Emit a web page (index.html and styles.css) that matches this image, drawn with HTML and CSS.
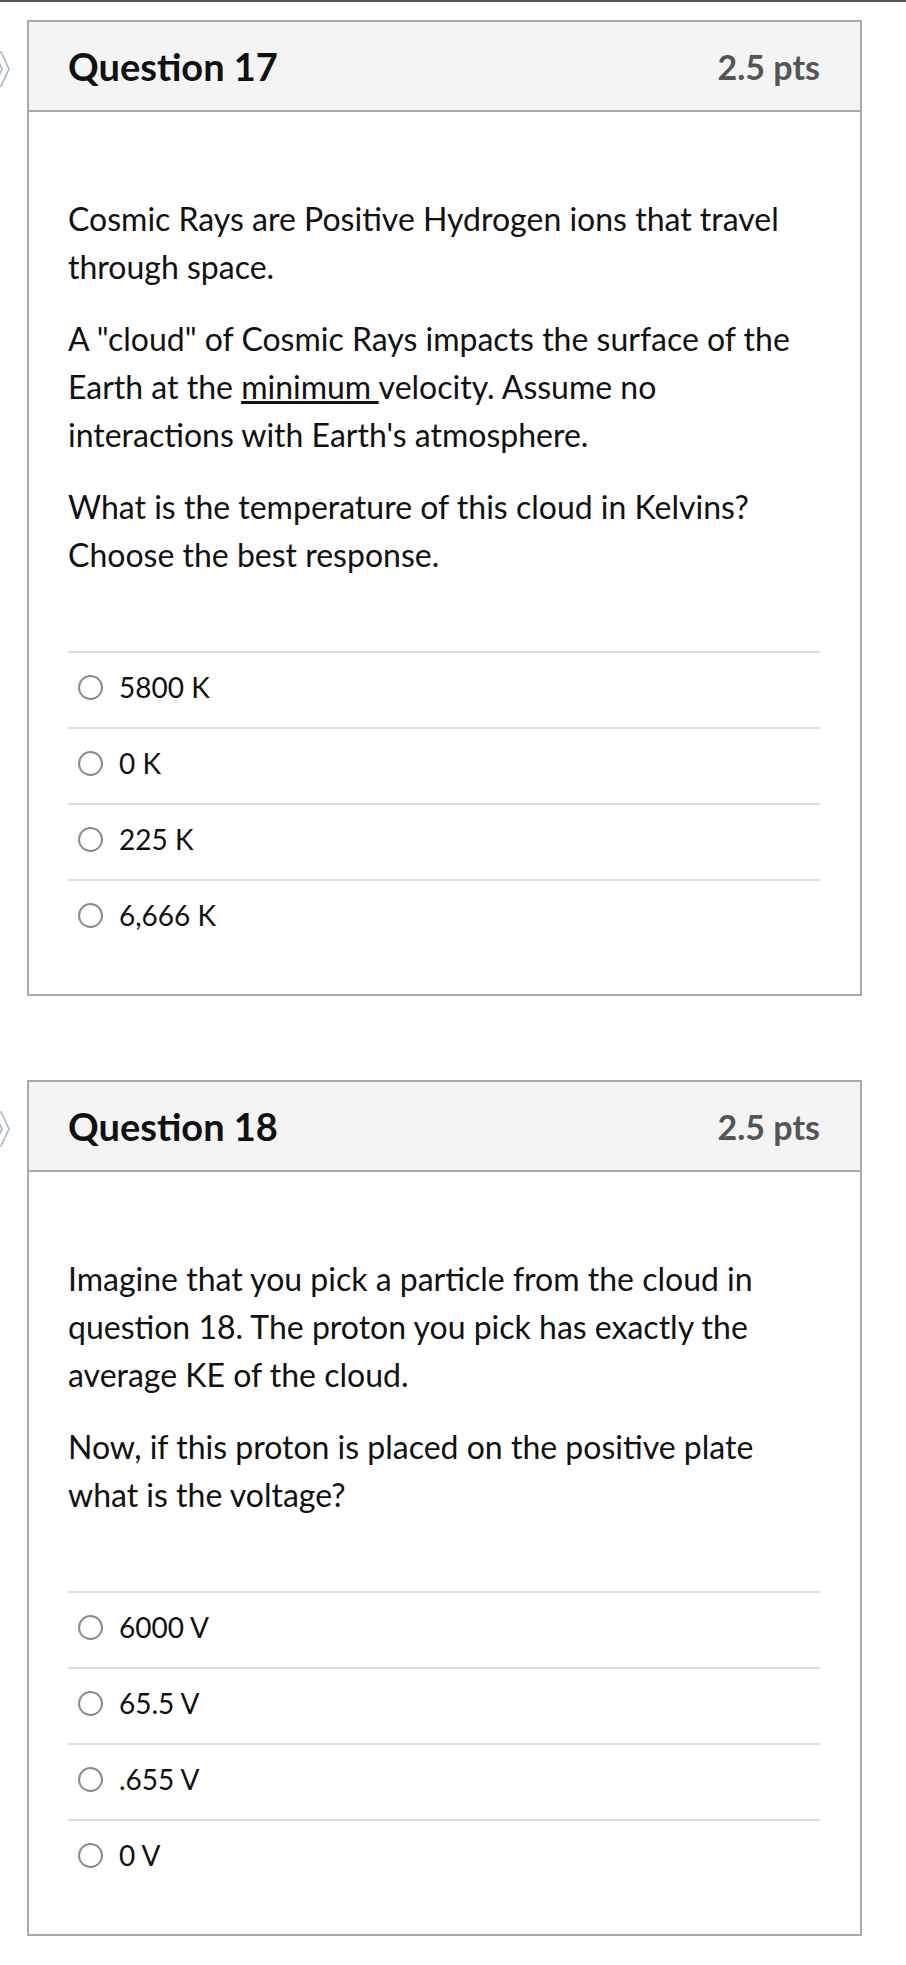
FILE: index.html
```html
<!DOCTYPE html>
<html lang="en">
<head>
<meta charset="utf-8">
<title>Quiz</title>
<link rel="stylesheet" href="styles.css">
</head>
<body>
<div class="topbar"></div>
<main class="quiz">
  <section class="question">
    <svg class="chev" width="14" height="36" viewBox="0 0 14 36"><path d="M-6 1 L1 1 L9 18 L1 35 L-6 35 L2 18 Z" fill="#fff" stroke="#a7b7c9" stroke-width="1.6" stroke-linejoin="miter"/></svg>
    <header class="q-head">
      <h2 class="q-title">Question 17</h2>
      <span class="q-pts">2.5 pts</span>
    </header>
    <div class="q-body">
      <p>Cosmic Rays are Positive Hydrogen ions that travel through space.</p>
      <p>A "cloud" of Cosmic Rays impacts the surface of the Earth at the <u>minimum </u>velocity. Assume no interactions with Earth's atmosphere.</p>
      <p>What is the temperature of this cloud in Kelvins? Choose the best response.</p>
      <ul class="answers">
        <li><span class="radio"></span>5800 K</li>
        <li><span class="radio"></span>0 K</li>
        <li><span class="radio"></span>225 K</li>
        <li><span class="radio"></span>6,666 K</li>
      </ul>
    </div>
  </section>
  <section class="question">
    <svg class="chev" width="14" height="36" viewBox="0 0 14 36"><path d="M-6 1 L1 1 L9 18 L1 35 L-6 35 L2 18 Z" fill="#fff" stroke="#a7b7c9" stroke-width="1.6" stroke-linejoin="miter"/></svg>
    <header class="q-head">
      <h2 class="q-title">Question 18</h2>
      <span class="q-pts">2.5 pts</span>
    </header>
    <div class="q-body">
      <p>Imagine that you pick a particle from the cloud in question 18. The proton you pick has exactly the average KE of the cloud.</p>
      <p>Now, if this proton is placed on the positive plate what is the voltage?</p>
      <ul class="answers">
        <li><span class="radio"></span>6000 V</li>
        <li><span class="radio"></span>65.5 V</li>
        <li><span class="radio"></span>.655 V</li>
        <li><span class="radio"></span>0 V</li>
      </ul>
    </div>
  </section>
</main>
</body>
</html>
```
FILE: styles.css
```css
* { box-sizing: border-box; }
html, body { margin: 0; padding: 0; background: #fff; }
body {
  font-family: Lato, "Noto Sans", sans-serif;
  color: #111;
}
.topbar {
  height: 2px;
  background: #555;
}
.quiz {
  padding: 18px 0 0 27px;
  display: flex;
  flex-direction: column;
  gap: 84px;
}
.question {
  position: relative;
  width: 835px;
  border: 2px solid #aaa;
}
.chev {
  position: absolute;
  left: -29px;
  top: 29px;
}
.q-head {
  height: 90px;
  background: #f4f4f4;
  border-bottom: 2px solid #aaa;
  display: flex;
  align-items: center;
  justify-content: space-between;
  padding: 0 40px 0 39px;
}
.q-title {
  margin: 0;
  font-size: 38px;
  font-weight: 700;
  color: #111;
}
.q-pts {
  font-size: 34px;
  font-weight: 700;
  color: #555;
}
.q-body {
  padding: 83px 40px 39px 39px;
}
.q-body p {
  margin: 0 0 24px;
  font-size: 32px;
  line-height: 48px;
}
.answers {
  list-style: none;
  margin: 72px 0 0;
  padding: 0;
}
.answers li {
  height: 76px;
  border-top: 2px solid #ddd;
  padding-bottom: 6px;
  display: flex;
  align-items: center;
  font-size: 28px;
  color: #111;
}
.radio {
  width: 25px;
  height: 25px;
  border: 2.5px solid #8c8c8c;
  border-radius: 50%;
  margin: 0 16px 0 10px;
  flex: none;
}
```
